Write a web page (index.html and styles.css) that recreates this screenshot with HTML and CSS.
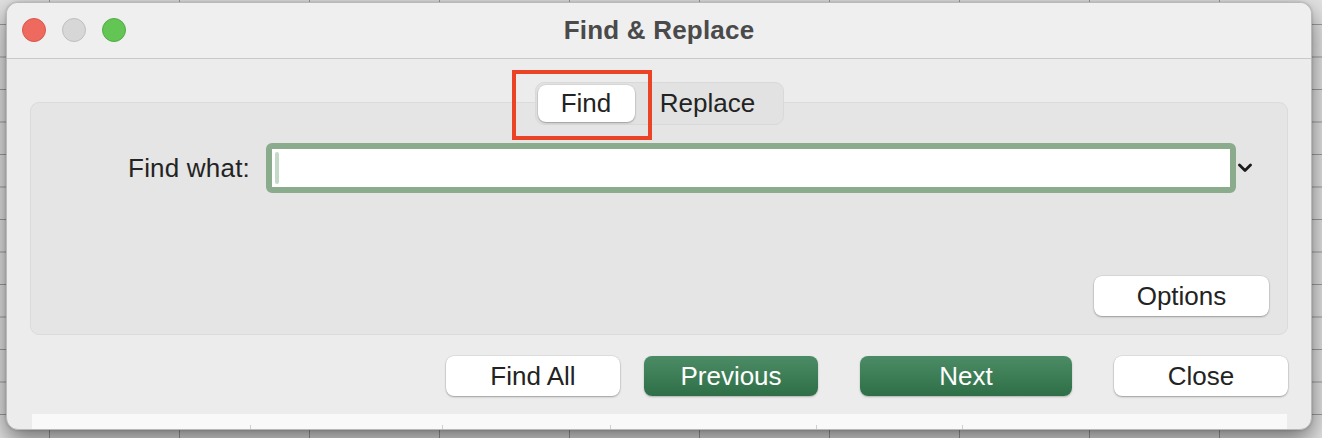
FILE: index.html
```html
<!DOCTYPE html>
<html lang="en">
<head>
<meta charset="utf-8">
<title>Find &amp; Replace</title>
<link rel="stylesheet" href="styles.css">
</head>
<body>
<div class="window">
  <div class="titlebar">
    <div class="lights">
      <span class="light red"></span>
      <span class="light gray"></span>
      <span class="light green"></span>
    </div>
    <div class="title">Find &amp; Replace</div>
  </div>
  <div class="content">
    <div class="tabs-wrap">
      <div class="tabs">
        <div class="tab active">Find</div>
        <div class="tab">Replace</div>
        <div class="highlight"></div>
      </div>
    </div>
    <div class="panel">
      <div class="find-row">
        <label class="label">Find what:</label>
        <div class="field"><span class="caret"></span></div>
        <svg class="chevron" width="14" height="10" viewBox="0 0 14 10"><path d="M1.5 2 L7 7.5 L12.5 2" fill="none" stroke="#1c1c1c" stroke-width="2.8" stroke-linecap="round" stroke-linejoin="round"/></svg>
      </div>
      <div class="options-row">
        <button class="btn btn-white btn-options">Options</button>
      </div>
    </div>
    <div class="actions">
      <button class="btn btn-white btn-findall">Find All</button>
      <button class="btn btn-green btn-prev">Previous</button>
      <button class="btn btn-green btn-next">Next</button>
      <button class="btn btn-white btn-close">Close</button>
    </div>
    <div class="results">
      <span class="col c1"></span>
      <span class="col c2"></span>
      <span class="col c3"></span>
      <span class="col c4"></span>
      <span class="col c5"></span>
    </div>
  </div>
</div>
</body>
</html>
```
FILE: styles.css
```css
* { box-sizing: border-box; }

html, body {
  margin: 0;
  padding: 0;
}

body {
  width: 1322px;
  height: 438px;
  overflow: hidden;
  font-family: "Liberation Sans", Arial, sans-serif;
  background-color: #e2e2e2;
  background-image:
    linear-gradient(#9c9c9c 1px, transparent 1px),
    linear-gradient(90deg, #9c9c9c 1px, transparent 1px);
  background-size: 130px 32.5px;
  background-position: 49px 24px;
}

.window {
  margin: 2px 0 0 6px;
  width: 1306px;
  height: 428px;
  border-radius: 12px;
  background: #ebeceb;
  border: 1px solid #b9b9b9;
  overflow: hidden;
  box-shadow: 0 10px 24px rgba(0, 0, 0, 0.5), 0 0 3px rgba(0, 0, 0, 0.2);
  display: flex;
  flex-direction: column;
}

.titlebar {
  position: relative;
  height: 56px;
  flex: none;
  background: #efeff0;
  border-bottom: 1px solid #c9c9c9;
  display: flex;
  align-items: center;
  justify-content: center;
}

.lights {
  position: absolute;
  left: 15px;
  top: 15px;
  display: flex;
  gap: 16px;
}

.light {
  width: 24px;
  height: 24px;
  border-radius: 50%;
  display: block;
}
.light.red { background: #ee6a5f; border: 1px solid #d8564b; }
.light.gray { background: #d7d7d7; border: 1px solid #bfbfbf; }
.light.green { background: #62c554; border: 1px solid #50ad43; }

.title {
  font-size: 26px;
  font-weight: bold;
  color: #4a4a4a;
  letter-spacing: 0.2px;
}

.content {
  flex: 1;
  display: flex;
  flex-direction: column;
  padding: 0 23px 0 23px;
}

.tabs-wrap {
  display: flex;
  justify-content: center;
  margin-top: 23px;
  margin-bottom: -23px;
  position: relative;
  z-index: 2;
}

.tabs {
  position: relative;
  display: flex;
  padding: 2px;
  height: 43px;
  border-radius: 9px;
  background: #e1e2e1;
  border: 1px solid #d8d9d8;
}

.tab {
  font-size: 26px;
  color: #232323;
  display: flex;
  align-items: center;
  justify-content: center;
  height: 37px;
}
.tab:first-child { width: 97px; }
.tab:nth-child(2) { width: 146px; }

.tab.active {
  background: #ffffff;
  border-radius: 8px;
  box-shadow: 0 1px 2px rgba(0, 0, 0, 0.3), 0 0 0 0.5px rgba(0, 0, 0, 0.08);
}

.highlight {
  position: absolute;
  left: -24px;
  top: -13px;
  width: 140px;
  height: 70px;
  border: 4px solid #ea4326;
}

.panel {
  height: 233px;
  flex: none;
  background: #e4e5e4;
  border: 1px solid #dadbda;
  border-radius: 9px;
  display: flex;
  flex-direction: column;
  justify-content: space-between;
  padding: 40px 18px 18px 0;
}

.find-row {
  display: flex;
  align-items: center;
  height: 50px;
}

.label {
  width: 219px;
  text-align: right;
  font-size: 26px;
  color: #232323;
  margin-right: 16px;
  letter-spacing: 0.2px;
}

.field {
  width: 970px;
  height: 50px;
  background: #ffffff;
  border: 6px solid #8aab8c;
  border-radius: 6px;
  display: flex;
  align-items: center;
  padding-left: 3px;
}

.caret {
  display: block;
  width: 4px;
  height: 32px;
  border-radius: 2px;
  background: #c3dbc6;
}

.chevron {
  margin-left: 2px;
}

.options-row {
  display: flex;
  justify-content: flex-end;
}

.btn {
  font-family: "Liberation Sans", Arial, sans-serif;
  font-size: 26px;
  height: 40px;
  border: none;
  border-radius: 8px;
  padding: 0;
  display: flex;
  align-items: center;
  justify-content: center;
  line-height: 1;
}

.btn-white {
  background: #ffffff;
  color: #232323;
  box-shadow: 0 1px 2px rgba(0, 0, 0, 0.3), 0 0 0 0.5px rgba(0, 0, 0, 0.1);
}

.btn-green {
  background: linear-gradient(#4b8c66, #2f6f47);
  color: #ffffff;
  box-shadow: 0 1px 2px rgba(0, 0, 0, 0.25);
}

.btn-options { width: 175px; }
.btn-findall { width: 174px; }
.btn-prev { width: 174px; margin-left: 24px; }
.btn-next { width: 212px; margin-left: 42px; }
.btn-close { width: 174px; margin-left: 42px; }

.actions {
  display: flex;
  justify-content: flex-end;
  margin-top: 21px;
}

.results {
  margin-top: 18px;
  margin-left: 2px;
  margin-right: 1px;
  flex: 1;
  background: #f9f9f9;
  display: flex;
  align-items: flex-end;
}

.col {
  display: block;
  height: 4px;
  border-right: 1px solid #cfcfcf;
}
.c1 { width: 219px; }
.c2 { width: 192px; }
.c3 { width: 168px; }
.c4 { width: 206px; }
.c5 { width: 146px; }
```
